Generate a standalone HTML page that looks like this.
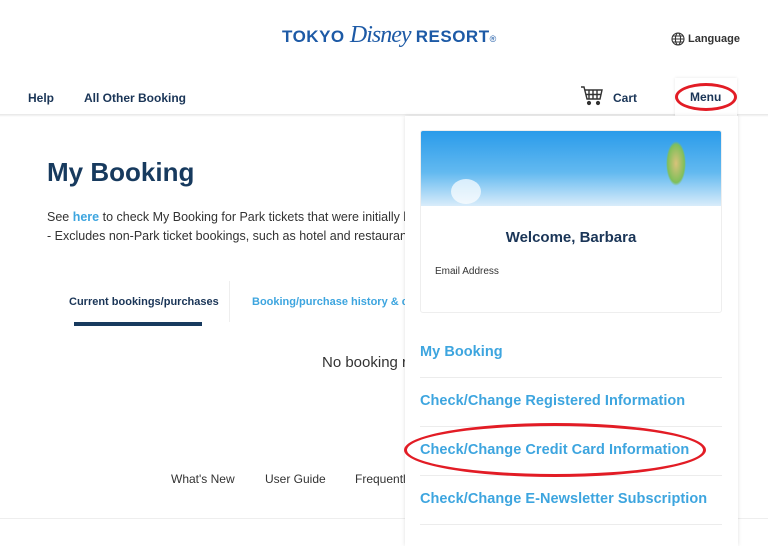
<!DOCTYPE html>
<html><head><meta charset="utf-8"><style>
*{margin:0;padding:0;box-sizing:border-box}
body{width:768px;height:539px;overflow:hidden;background:#fff;font-family:"Liberation Sans",Arial,sans-serif;position:relative;color:#333}
.a{position:absolute;white-space:nowrap}
.logo{left:282px;top:22px;color:#1d5aa6;font-weight:bold;font-size:17px;letter-spacing:0.5px}
.logo i{font-family:"Liberation Serif",serif;font-size:24px;font-weight:normal;font-style:italic;letter-spacing:-1px}
.nav{font-size:12px;font-weight:bold;color:#1a3557}
.mi{left:420px;font-size:14.5px;font-weight:bold;color:#3da5df;letter-spacing:0.05px}
.dv{left:420px;width:302px;height:1px;background:#ececec}
</style></head><body>
<div class="a logo">TOKYO <i>Disney</i> RESORT<span style="font-size:9px;font-weight:normal">®</span></div>
<svg class="a" style="left:671px;top:32px" width="14" height="14" viewBox="0 0 14 14" fill="none" stroke="#333" stroke-width="1.1"><circle cx="7" cy="7" r="6"/><ellipse cx="7" cy="7" rx="2.6" ry="6"/><path d="M1 7h12M2 4h10M2 10h10"/></svg>
<div class="a" style="left:688px;top:33px;font-size:11px;font-weight:bold;color:#333">Language</div>
<div class="a nav" style="left:28px;top:91px">Help</div>
<div class="a nav" style="left:84px;top:91px">All Other Booking</div>
<svg class="a" style="left:580px;top:85px" width="24" height="21" viewBox="0 0 24 21" fill="none" stroke="#333" stroke-width="1.4"><path d="M1 2h3l3 12h13l2-9H5"/><path d="M9 5v9M13 5v9M17 5v9M6 9.5h15"/><circle cx="9" cy="18" r="1.4" fill="#333"/><circle cx="18" cy="18" r="1.4" fill="#333"/></svg>
<div class="a nav" style="left:613px;top:91px">Cart</div>
<div class="a" style="left:0;top:114px;width:768px;height:3px;background:linear-gradient(#e6e6e6,#fff)"></div>
<div class="a" style="left:675px;top:78px;width:62px;height:40px;background:#fff;box-shadow:0 0 3px rgba(0,0,0,.1)"></div>
<div class="a nav" style="left:690px;top:90px">Menu</div>
<div class="a" style="left:675px;top:83px;width:62px;height:28px;border:3px solid #e21c25;border-radius:50%"></div>

<div class="a" style="left:47px;top:157px;font-size:26px;font-weight:bold;color:#173a5e">My Booking</div>
<div class="a" style="left:47px;top:210px;font-size:12.5px">See <b style="color:#3da5df">here</b> to check My Booking for Park tickets that were initially boo</div>
<div class="a" style="left:47px;top:229px;font-size:12.5px">- Excludes non-Park ticket bookings, such as hotel and restaurant re</div>
<div class="a" style="left:69px;top:296px;font-size:11px;font-weight:bold;color:#1a3557">Current bookings/purchases</div>
<div class="a" style="left:74px;top:322px;width:128px;height:4px;background:#173a5e"></div>
<div class="a" style="left:229px;top:281px;width:1px;height:41px;background:#eee"></div>
<div class="a" style="left:252px;top:296px;font-size:11px;font-weight:bold;color:#3da5df">Booking/purchase history &amp; car</div>
<div class="a" style="left:322px;top:354px;font-size:15px">No booking r</div>
<div class="a" style="left:171px;top:472px;font-size:12px">What's New</div>
<div class="a" style="left:265px;top:472px;font-size:12px">User Guide</div>
<div class="a" style="left:355px;top:472px;font-size:12px">Frequentl</div>
<div class="a" style="left:0;top:518px;width:768px;height:1px;background:#eee"></div>

<div class="a" style="left:405px;top:116px;width:333px;height:430px;background:#fff;box-shadow:0 0 4px rgba(0,0,0,.12)"></div>
<div class="a" style="left:420px;top:130px;width:302px;height:183px;border:1px solid #eee;border-radius:3px;overflow:hidden">
<div style="height:75px;background:linear-gradient(180deg,#2a9bea 0%,#62b9f0 55%,#d9ecfa 100%);position:relative">
<div style="position:absolute;left:30px;top:48px;width:30px;height:25px;border-radius:50%;background:rgba(255,255,255,.7)"></div>
<div style="position:absolute;left:245px;top:10px;width:20px;height:45px;background:radial-gradient(#d9c27a,#7fbf5a 60%,transparent 70%)"></div>
</div></div>
<div class="a" style="left:420px;top:229px;width:302px;text-align:center;font-size:15px;font-weight:bold;color:#1a3557">Welcome, Barbara</div>
<div class="a" style="left:435px;top:266px;font-size:10px;color:#333">Email Address</div>
<div class="a mi" style="top:344px">My Booking</div>
<div class="a dv" style="top:377px"></div>
<div class="a mi" style="top:393px">Check/Change Registered Information</div>
<div class="a dv" style="top:426px"></div>
<div class="a mi" style="top:442px">Check/Change Credit Card Information</div>
<div class="a dv" style="top:475px"></div>
<div class="a mi" style="top:491px">Check/Change E-Newsletter Subscription</div>
<div class="a dv" style="top:524px"></div>
<div class="a" style="left:404px;top:423px;width:302px;height:54px;border:3px solid #e21c25;border-radius:50%"></div>
</body></html>
